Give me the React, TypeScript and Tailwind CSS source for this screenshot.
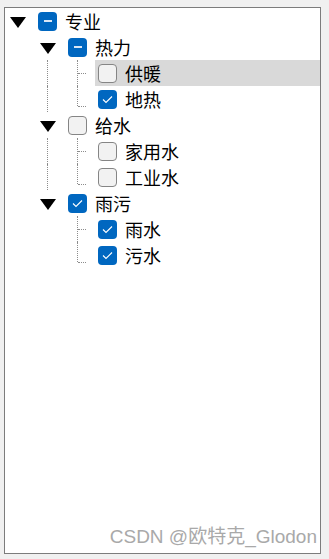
import React from 'react';

type CheckState = 'on' | 'off' | 'partial';

interface Row {
  label: string;
  level: 0 | 1 | 2;
  state: CheckState;
  expander?: boolean;
  selected?: boolean;
  cont?: boolean; // sibling line in the level-1 column
  branch?: 'mid' | 'last';
}

const rows: Row[] = [
  { label: '专业', level: 0, state: 'partial', expander: true },
  { label: '热力', level: 1, state: 'partial', expander: true },
  { label: '供暖', level: 2, state: 'off', selected: true, cont: true, branch: 'mid' },
  { label: '地热', level: 2, state: 'on', cont: true, branch: 'last' },
  { label: '给水', level: 1, state: 'off', expander: true },
  { label: '家用水', level: 2, state: 'off', cont: true, branch: 'mid' },
  { label: '工业水', level: 2, state: 'off', cont: true, branch: 'last' },
  { label: '雨污', level: 1, state: 'on', expander: true },
  { label: '雨水', level: 2, state: 'on', branch: 'mid' },
  { label: '污水', level: 2, state: 'on', branch: 'last' },
];

const cjk = { fontFamily: '"Noto Sans CJK SC", "Noto Sans", sans-serif' };

const Triangle = () => (
  <svg width="16" height="11" viewBox="0 0 16 11" className="ml-[5px] mt-[3px]">
    <polygon points="0,0 16,0 8,11" fill="#000" />
  </svg>
);

const CheckBox = ({ state }: { state: CheckState }) => {
  if (state === 'off') {
    return <div className="w-[19px] h-[19px] shrink-0 rounded-[4px] border border-[#858585] bg-[#f2f2f2]" />;
  }
  return (
    <div className="w-[19px] h-[19px] shrink-0 rounded-[4px] bg-[#0067c0] flex items-center justify-center">
      {state === 'on' ? (
        <svg width="11" height="9" viewBox="0 0 11 9">
          <polyline points="1,4.5 4,7.5 10,1.5" fill="none" stroke="#fff" strokeWidth="1.1" />
        </svg>
      ) : (
        <div className="w-[8px] h-[2px] bg-[#dbe7f5]" />
      )}
    </div>
  );
};

const Guides = ({ row }: { row: Row }) => (
  <>
    <div className="w-[30px] h-full shrink-0" />
    <div className="relative w-[30px] h-full shrink-0">
      {row.cont && <div className="absolute left-[12px] top-0 h-full border-l border-dotted border-[#8c8c8c]" />}
    </div>
    <div className="relative w-[30px] h-full shrink-0">
      {row.branch === 'mid' ? (
        <>
          <div className="absolute left-[12px] top-0 h-full border-l border-dotted border-[#8c8c8c]" />
          <div className="absolute left-[13px] top-[13px] w-[8px] border-t border-dotted border-[#8c8c8c]" />
        </>
      ) : (
        <>
          <div className="absolute left-[12px] top-0 h-[20px] border-l border-dotted border-[#8c8c8c]" />
          <div className="absolute left-[13px] top-[20px] w-[8px] border-t border-dotted border-[#8c8c8c]" />
        </>
      )}
    </div>
  </>
);

const TreeRow = ({ row }: { row: Row }) => (
  <div className="flex h-[26px]">
    {row.level === 2 ? (
      <Guides row={row} />
    ) : (
      <>
        {row.level === 1 && <div className="w-[30px] shrink-0" />}
        <div className="w-[30px] h-full shrink-0 flex items-center">
          {row.expander && <Triangle />}
        </div>
      </>
    )}
    <div className={`flex-1 flex items-center pl-[3px] ${row.selected ? 'bg-[#d9d9d9]' : ''}`}>
      <CheckBox state={row.state} />
      <span className="ml-[8px] text-[18px] leading-[26px] text-black" style={cjk}>
        {row.label}
      </span>
    </div>
  </div>
);

export default function App() {
  return (
    <div className="relative w-[329px] h-[559px] bg-[#f0f0f0] pt-[7px] pl-[4px]">
      <div className="w-[317px] h-[547px] border border-[#7c7c7c] bg-white flex flex-col">
        {rows.map(r => (
          <TreeRow key={r.label} row={r} />
        ))}
      </div>
      <div
        className="absolute right-[12px] top-[523px] text-[19px] leading-[28px] text-[#a9a9a9]"
        style={{ fontFamily: '"Liberation Sans", "Noto Sans CJK SC", sans-serif' }}
      >
        CSDN @欧特克_Glodon
      </div>
    </div>
  );
}
